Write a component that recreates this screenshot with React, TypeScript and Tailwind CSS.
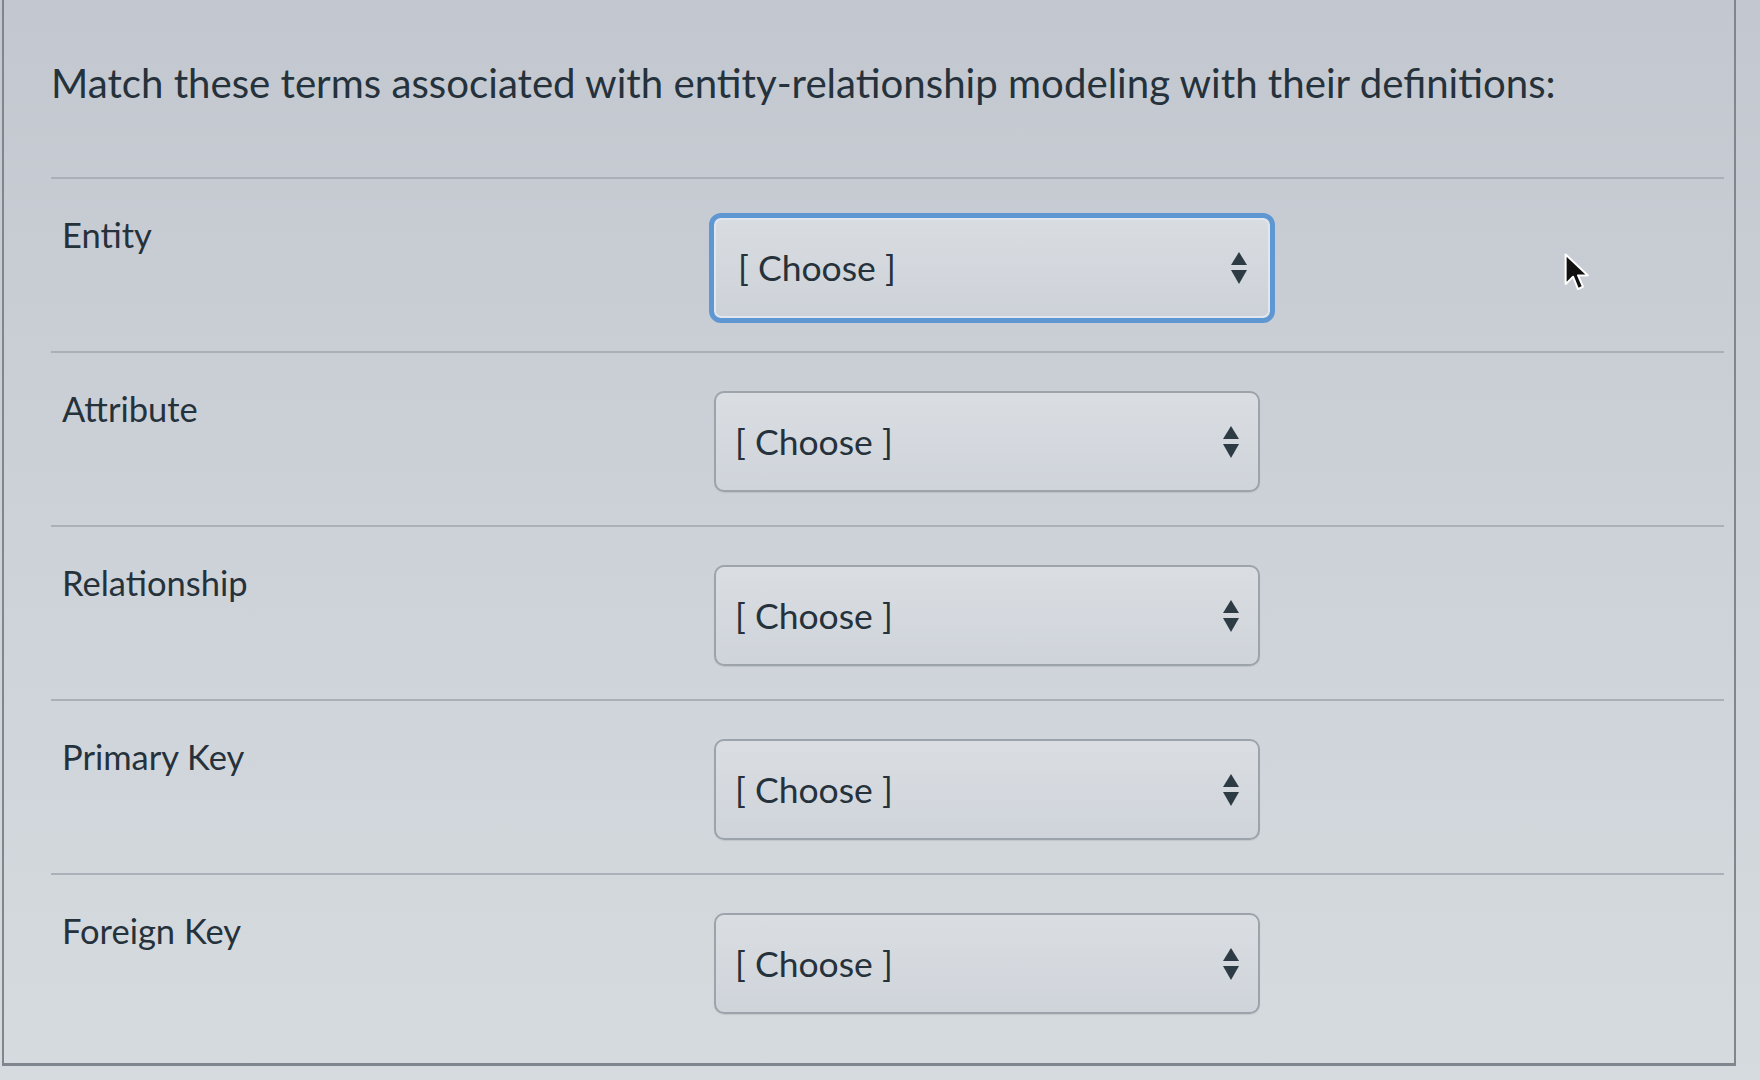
import React from 'react'

const terms = ['Entity', 'Attribute', 'Relationship', 'Primary Key', 'Foreign Key']

function SortArrows() {
  return (
    <svg width="18" height="34" viewBox="0 0 18 34" className="shrink-0">
      <path d="M9 1 L17 14 L1 14 Z" fill="#2d3b45" />
      <path d="M1 19 L17 19 L9 33 Z" fill="#2d3b45" />
    </svg>
  )
}

function ChooseSelect({ focused }: { focused?: boolean }) {
  return (
    <div
      className={
        focused
          ? 'w-[566px] h-[110px] -ml-[5px] -mt-[4px] rounded-[12px] border-[5px] border-[#5f97d2] shadow-[inset_0_0_0_2px_#e1e7ee] bg-gradient-to-b from-[#d9dde2] to-[#cdd2d8] flex items-center justify-between pl-[24px] pr-[22px]'
          : 'w-[546px] h-[101px] rounded-[10px] border-2 border-[#9ca3ab] bg-gradient-to-b from-[#dadee3] to-[#cfd4da] shadow-[0_1px_1px_rgba(0,0,0,0.08)] flex items-center justify-between pl-[19px] pr-[18px]'
      }
    >
      <span className="text-[35.5px] leading-none text-[#26323b]">[ Choose ]</span>
      <SortArrows />
    </div>
  )
}

export default function App() {
  return (
    <div
      className="w-[1760px] h-[1080px] overflow-hidden bg-gradient-to-b from-[#c3c8d0] via-[#cdd2d9] to-[#d6dbdf] relative"
      style={{ fontFamily: 'Lato, "Open Sans", sans-serif' }}
    >
      <div className="ml-[2px] w-[1734px] h-[1066px] border-l-2 border-r-2 border-b-[3px] border-[#7f868e] text-[#26323b]">
        <div className="pl-[47px] pr-[10px]">
          {/* Question text */}
          <h1 className="pt-[60px] pb-[71px] text-[40.2px] leading-[46px] font-normal whitespace-nowrap">
            Match these terms associated with entity-relationship modeling with their definitions:
          </h1>

          {/* Matching rows */}
          {terms.map((term, i) => (
            <div key={term} className="h-[174px] border-t-2 border-[#aab0b8] flex">
              <div className="w-[663px] pl-[11px] pt-[34px] text-[34.5px] leading-[44px]">{term}</div>
              <div className="pt-[38px]">
                <ChooseSelect focused={i === 0} />
              </div>
            </div>
          ))}
        </div>
      </div>

      {/* mouse pointer */}
      <svg
        width="30"
        height="42"
        viewBox="0 0 24 34"
        className="absolute left-[1563px] top-[252px]"
      >
        <path
          d="M2 2 L2 26 L8 20 L12 30 L16 28 L12 19 L20 19 Z"
          fill="#111"
          stroke="#fff"
          strokeWidth="1.6"
          strokeLinejoin="round"
        />
      </svg>
    </div>
  )
}
